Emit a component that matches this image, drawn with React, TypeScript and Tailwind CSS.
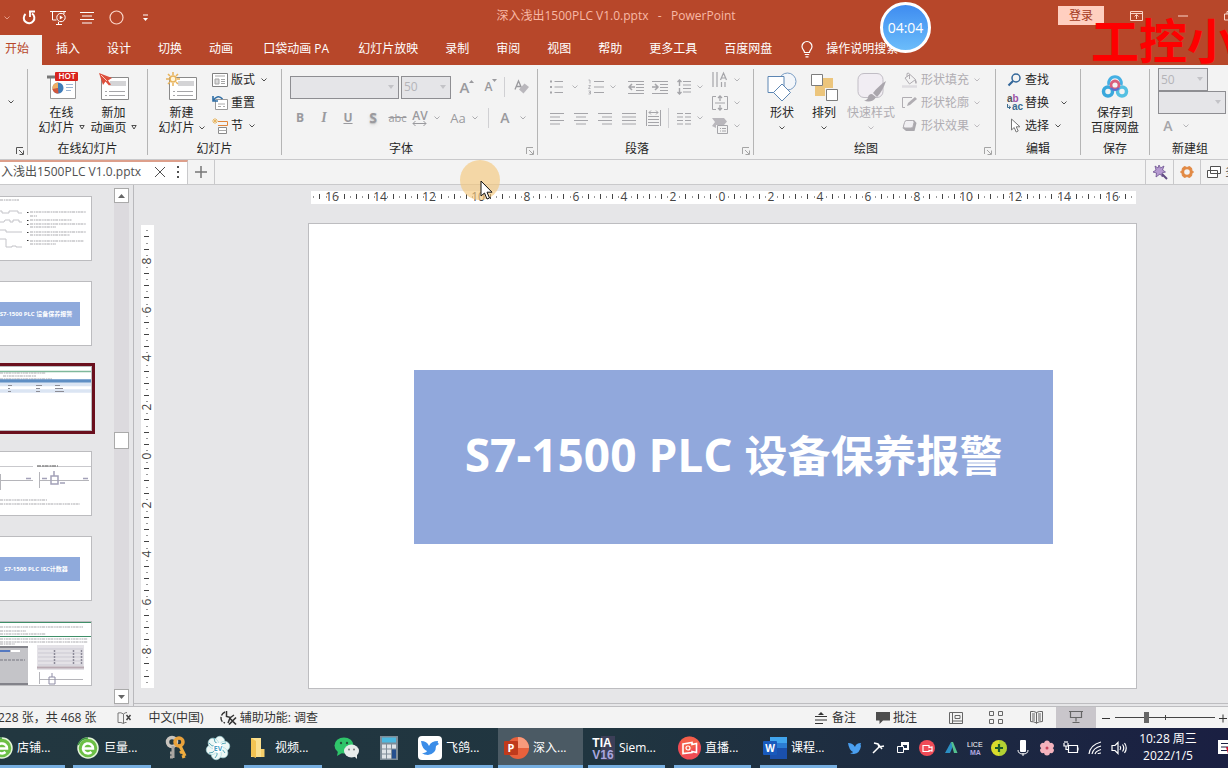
import React from 'react'

type SvgProps = {
  w: number
  h: number
  className?: string
  children: React.ReactNode
}

function Svg({ w, h, className = '', children }: SvgProps) {
  return (
    <svg
      width={w}
      height={h}
      viewBox={`0 0 ${w} ${h}`}
      fill="none"
      stroke="currentColor"
      aria-hidden="true"
      className={`shrink-0 overflow-visible ${className}`}
    >
      {children}
    </svg>
  )
}

function Chevron({ className = '' }: { className?: string }) {
  return (
    <Svg w={6} h={4} className={`opacity-80 ${className}`}>
      <path d="M.5 .5 3 3 5.5 .5" />
    </Svg>
  )
}

function Triangle() {
  return (
    <Svg w={6} h={5}>
      <path d="M.8 .5h4.400L3 4z" strokeWidth=".8" />
    </Svg>
  )
}

const tabs = [
  '插入', '设计', '切换', '动画', '\u00a0口袋动画 PA\u2009', '幻灯片放映', '录制',
  '审阅', '视图', '帮助', '更多工具', '百度网盘',
]

function TitleBar() {
  return (
    <div className="flex h-[35px] items-center text-[#fbd5c8]">
      <div className="flex flex-1 items-center pl-1">
        <button aria-label="更多撤消"><Chevron className="text-[#f0b3a2]" /></button>
        <button aria-label="重做" className="ml-3 text-white">
          <Svg w={14} h={15}>
            <path d="M3.500 4A5.300 5.300 0 1 0 10 3.500" strokeWidth="2" />
            <path d="M7 1.500h6M8 1.500v5.500" strokeWidth="1.800" />
          </Svg>
        </button>
        <button aria-label="从头开始" className="ml-3.5 text-white">
          <Svg w={17} h={16}>
            <path d="M0 1.500h16M2.500 2v8h4M6 14.500h6M8.500 12v2M14 2v2" />
            <circle cx="11" cy="7.500" r="4.200" />
            <path d="M9.800 5.500v4l3.200-2z" fill="currentColor" stroke="none" />
          </Svg>
        </button>
        <button aria-label="居中" className="ml-[13px] text-white">
          <Svg w={14} h={13}>
            <path d="M0 1.500h14M2 5h10M0 8.500h14M2 12h10" />
          </Svg>
        </button>
        <button aria-label="椭圆" className="ml-[15px]">
          <Svg w={15} h={15}><circle cx="7.500" cy="7.500" r="6.500" strokeWidth="1.200" /></Svg>
        </button>
        <button aria-label="自定义快速访问工具栏" className="ml-[18px] text-white">
          <Svg w={7} h={8}>
            <path d="M1 1h5" />
            <path d="M1 4h5L3.500 7z" fill="currentColor" stroke="none" />
          </Svg>
        </button>
      </div>
      <div className="whitespace-pre pb-1 text-[#f7b9a6]">深入浅出1500PLC V1.0.pptx   -   PowerPoint</div>
      <div className="flex flex-1 items-center justify-end self-start pt-[6px]">
        <button className="h-[19px] w-[46px] bg-[#ffcfc0] text-[#a43a20]">登录</button>
        <button aria-label="功能区显示选项" className="ml-[26px]">
          <Svg w={13} h={10}>
            <path d="M.5.5h12v9H.5zM.5 2.500h12M6.500 8V4M4.500 5.500l2-2 2 2" />
          </Svg>
        </button>
        <button aria-label="最小化" className="ml-[35px]">
          <Svg w={10} h={2}><path d="M0 1h10" /></Svg>
        </button>
        <button aria-label="还原" className="ml-9 w-1 overflow-hidden">
          <Svg w={10} h={10}><path d="M.5 3h6v6h-6zM3 3V.5h6.500v6H7" /></Svg>
        </button>
      </div>
    </div>
  )
}

function TabStrip() {
  return (
    <nav className="flex h-[30px] items-stretch text-white">
      <button className="bg-[#f3f3f3] pr-[13px] pb-0.5 pl-[5px] text-[#b7472a]">开始</button>
      {tabs.map((tab) => (
        <button key={tab} className="pr-[13px] pb-0.5 pl-[14px] whitespace-nowrap">{tab}</button>
      ))}
      <label className="ml-4 flex items-center gap-[13px] pb-0.5">
        <Svg w={12} h={17}>
          <path d="M3.500 11.500C3.500 9 1 8.500 1 5.500a5 5 0 0 1 10 0c0 3-2.500 3.500-2.500 6zM3.800 13.500h4.400M4.500 15.800h3" strokeWidth="1.200" />
        </Svg>
        <input
          aria-label="操作说明搜索"
          placeholder="操作说明搜索"
          className="w-24 bg-transparent placeholder:text-white placeholder:opacity-100 focus:outline-none"
        />
      </label>
    </nav>
  )
}

type GroupProps = {
  label: string
  launcher?: boolean
  className?: string
  children: React.ReactNode
}

function Group({ label, launcher, className = '', children }: GroupProps) {
  return (
    <section className={`flex shrink-0 flex-col ${className}`}>
      <div className="flex flex-1">{children}</div>
      <div className="flex h-[19px] items-center pb-0.5">
        <span className="flex-1 text-center">{label}</span>
        {launcher && (
          <button aria-label={`${label}设置`} className="mr-[3px] flex w-[14px] justify-end pt-1 text-[#a5a5a5]">
            <Svg w={8} h={8}>
              <path d="M.5 7V.5H7M3 3l4 4M7.500 3.500v4h-4" />
            </Svg>
          </button>
        )}
      </div>
    </section>
  )
}

function Divider() {
  return <div className="my-1 w-px shrink-0 bg-[#b5b5b5]" />
}

function BigButton({ icon, lines, mark, muted, className = '' }: {
  icon: React.ReactNode
  lines: string[]
  mark?: React.ReactNode
  muted?: boolean
  className?: string
}) {
  return (
    <button disabled={muted} className={`flex shrink-0 flex-col items-center pt-1 leading-[15px] whitespace-nowrap ${muted ? 'text-[#b0adb2]' : 'text-[#262626]'} ${className}`}>
      <span className="flex h-9 items-center justify-center">{icon}</span>
      <span>{lines[0]}</span>
      <span className="flex h-[15px] items-center gap-1">
        {lines[1]}
        {mark}
      </span>
    </button>
  )
}

function SmallButton({ icon, label, chevron, muted, chevronGap = 'ml-1.5' }: {
  icon: React.ReactNode
  label: string
  chevron?: boolean
  muted?: boolean
  chevronGap?: string
}) {
  return (
    <button disabled={muted} className={`flex h-[23px] items-center whitespace-nowrap ${muted ? 'text-[#b0adb2]' : 'text-[#262626]'}`}>
      <span className="flex w-[19px]">{icon}</span>
      {label}
      {chevron && <Chevron className={chevronGap} />}
    </button>
  )
}

function Combo({ label, value, className }: { label: string; value: string; className: string }) {
  return (
    <div className={`relative h-[23px] border border-[#8e8e92] bg-[#e5e5e8] ${className}`}>
      <select disabled aria-label={label} className="h-full w-full appearance-none pl-0.5 text-[#b4b4b8]">
        <option>{value}</option>
      </select>
      <Svg w={6} h={4} className="absolute top-2 right-1 text-[#c3c3c7]">
        <path d="M0 0h6L3 4z" fill="currentColor" stroke="none" />
      </Svg>
    </div>
  )
}

function IconButton({ label, className = 'w-6', children }: { label: string; className?: string; children: React.ReactNode }) {
  return (
    <button aria-label={label} disabled className={`flex h-6 shrink-0 items-center justify-center ${className}`}>
      {children}
    </button>
  )
}

const slideCard = (
  <>
    <path d="M3.500 5.500h27v22h-27z" fill="#fff" stroke="#8a8a8a" />
    <path d="M12 9h16v5H12z" fill="#d4d4d6" stroke="none" />
    <path d="M7 19.500h2M11 19.500h16M7 23.500h2M11 23.500h16" stroke="#a5a5a8" />
  </>
)

function alignPath(kind: string) {
  if (kind === '左对齐') return 'M0 1.500h14M0 5h10M0 8.500h14M0 12h10'
  if (kind === '居中') return 'M0 1.500h14M2 5h10M0 8.500h14M2 12h10'
  if (kind === '右对齐') return 'M0 1.500h14M4 5h10M0 8.500h14M4 12h10'
  return 'M0 1.500h14M0 5h14M0 8.500h14M0 12h14'
}

function Ribbon() {
  return (
    <div className="flex h-[95px] overflow-hidden border-b border-[#c9c9cb] bg-[#f3f3f3] text-[#262626]">
      <section className="flex w-[27px] shrink-0 flex-col justify-between pt-[35px] pl-2">
        <button aria-label="更多"><Chevron /></button>
        <button aria-label="剪贴板设置" className="pb-1 pl-2 text-[#555]">
          <Svg w={8} h={8}><path d="M.5 7V.5H7M3 3l4 4M7.500 3.500v4h-4" /></Svg>
        </button>
      </section>
      <Divider />

      <Group label="在线幻灯片" className="w-[119px]">
        <BigButton
          className="ml-2.5 w-[47px]"
          lines={['在线', '幻灯片']}
          mark={<Triangle />}
          icon={
            <Svg w={32} h={32}>
              <path d="M4.500 5.500h25v22h-25z" fill="#fff" stroke="#999" />
              <path d="M1 6h8" strokeWidth="3" stroke="#777" />
              <circle cx="12" cy="17" r="5.500" fill="#3f7cb8" stroke="none" />
              <path d="M12 17v-5.500a5.500 5.500 0 0 0-5 8z" fill="#f0ad63" stroke="none" />
              <path d="M12 17l-5.500 1a5.500 5.500 0 0 0 6 4.500z" fill="#d2573c" stroke="none" />
              <path d="M20 13.500h7M20 16.500h7M20 19.500h5" stroke="#9ab5d4" />
              <rect x="9" y="1" width="23" height="9" rx="1" fill="#d9231c" stroke="none" />
              <text x="21" y="8" textAnchor="middle" fontSize="8" fontWeight="600" fill="#fff" stroke="none">HOT</text>
            </Svg>
          }
        />
        <BigButton
          className="ml-[5px] w-[47px]"
          lines={['新加', '动画页']}
          mark={<Triangle />}
          icon={
            <Svg w={32} h={30}>
              {slideCard}
              <path d="M1 1l13 5-4 2.500 3 4-2 1-3.500-4L5 13z" fill="#dd4f3c" stroke="none" />
              <path d="M3 3l6 6" stroke="#f8c8bd" />
            </Svg>
          }
        />
      </Group>
      <Divider />

      <Group label="幻灯片" className="w-[133px]">
        <BigButton
          className="ml-2.5 w-[47px]"
          lines={['新建', '幻灯片']}
          mark={<Chevron />}
          icon={
            <Svg w={32} h={30}>
              {slideCard}
              <circle cx="7" cy="7" r="3" fill="#fff4d8" stroke="#e8b35a" strokeWidth="1.500" />
              <path d="M7 0v3M7 11v3M0 7h3M11 7h3M2 2l2 2M10 10l2 2M12 2l-2 2M2 12l2-2" stroke="#e8b35a" strokeWidth="1.500" />
            </Svg>
          }
        />
        <div className="ml-[7px] flex flex-col pt-[3px]">
          <SmallButton
            label="版式"
            chevron
            icon={
              <Svg w={16} h={14}>
                <path d="M.5.5h15v13H.5z" fill="#fff" stroke="#808080" />
                <path d="M3 3h10M3 6h4v5H3z" fill="#d9d9d9" stroke="#a5a5a5" />
                <path d="M9 6.500h4M9 8.500h4M9 10.500h4" stroke="#a5a5a5" />
              </Svg>
            }
          />
          <SmallButton
            label="重置"
            icon={
              <Svg w={16} h={14}>
                <path d="M3.500 3.500h12v10h-12z" fill="#fff" stroke="#999" />
                <path d="M6 8h7M6 10.500h3M11 10.500h2" stroke="#aaa" />
                <path d="M1 0v5h5M1.500 4.500C3 1 7-1 10.500 3" stroke="#2f6ea5" strokeWidth="1.600" />
              </Svg>
            }
          />
          <SmallButton
            label="节"
            chevron
            icon={
              <Svg w={16} h={16}>
                <path d="M6.500 9.500v6h8v-6z" stroke="#8a8a8a" fill="#fff" />
                <path d="M6.500 12.500h8" stroke="#aaa" />
                <path d="M6 3.500h9.500v4H6" stroke="#e0863c" />
                <path d="M3 0v6M0 3h6M1 1l4 4M5 1L1 5" stroke="#e8b35a" strokeWidth=".9" />
              </Svg>
            }
          />
        </div>
      </Group>
      <Divider />

      <Group label="字体" launcher className="w-[255px]">
        <div className="flex flex-1 flex-col pt-2.5 pl-1.5 text-[#9a9a9e]">
          <div className="flex h-6 items-center gap-0.5 pl-0.5">
            <Combo label="字体" value="" className="w-[109px]" />
            <Combo label="字号" value="50" className="w-[50px]" />
            <IconButton label="增大字号" className="ml-[3px] w-[22px]">
              <span className="text-[15px] font-semibold">A</span>
              <Svg w={5} h={4} className="mb-3"><path d="M0 4h5L2.500 1z" fill="currentColor" stroke="none" /></Svg>
            </IconButton>
            <IconButton label="减小字号" className="w-[22px]">
              <span className="text-xs font-semibold">A</span>
              <Svg w={5} h={4} className="mb-3"><path d="M0 0h5L2.500 3z" fill="currentColor" stroke="none" /></Svg>
            </IconButton>
            <div className="h-5 w-px bg-[#d0d0d3]" />
            <IconButton label="清除格式" className="w-7">
              <Svg w={15} h={15}>
                <path d="M1 9.500L4.500 1 8 9M2.500 6.500h4" strokeWidth="1.300" />
                <path d="M5 9.500l5.500-6L15 7l-5.500 6.500z" fill="#b9b7bc" stroke="none" />
              </Svg>
            </IconButton>
          </div>
          <div className="mt-[7px] flex h-6 items-center">
            <IconButton label="加粗"><b>B</b></IconButton>
            <IconButton label="倾斜"><i className="font-['Liberation_Serif',serif] text-sm font-bold">I</i></IconButton>
            <IconButton label="下划线"><u className="font-bold">U</u></IconButton>
            <IconButton label="文字阴影" className="w-[26px]"><b className="text-sm text-shadow-md">S</b></IconButton>
            <IconButton label="删除线" className="w-[23px]"><s className="text-[11px]">abc</s></IconButton>
            <IconButton label="字符间距" className="w-[34px] gap-1.5">
              <span className="flex flex-col items-center text-xs leading-[11px] font-semibold">
                AV
                <Svg w={15} h={5}><path d="M1 2.500h13M3.500 0L1 2.500 3.500 5M11.500 0L14 2.500 11.500 5" /></Svg>
              </span>
              <Chevron />
            </IconButton>
            <IconButton label="更改大小写" className="w-[38px] gap-1.5 pl-1"><span className="text-[13px]">Aa</span><Chevron /></IconButton>
            <div className="ml-[7px] h-5 w-px bg-[#d0d0d3]" />
            <IconButton label="字体颜色" className="ml-1.5 w-9 gap-2.5"><span className="text-sm font-semibold">A</span><Chevron /></IconButton>
          </div>
        </div>
      </Group>
      <Divider />

      <Group label="段落" launcher className="w-[215px]">
        <div className="flex pl-3 text-[#a5a5a9]">
          <div className="flex w-[158px] flex-col pt-2.5">
            <div className="flex h-6 items-center">
              <IconButton label="项目符号" className="w-[38px] justify-start gap-2">
                <Svg w={14} h={16}>
                  <path d="M4.500 2.500H13M4.500 8H13M4.500 13.500H13" />
                  <path d="M0 1.500h2v2H0zM0 7h2v2H0zM0 12.500h2v2H0z" fill="currentColor" stroke="none" />
                </Svg>
                <Chevron />
              </IconButton>
              <IconButton label="编号" className="w-9 justify-start gap-1.5">
                <Svg w={16} h={16}>
                  <path d="M6 2.500h10M6 8h10M6 13.500h10" />
                  <path d="M.5 1H2v3.500M.5 6.500h2L.5 9.500h2M.5 12h2v1.500H1M2.500 13.500V15H.5" strokeWidth=".8" />
                </Svg>
                <Chevron />
              </IconButton>
              <IconButton label="降低列表级别">
                <Svg w={16} h={14}>
                  <path d="M0 1.500h16M8 4.500h8M8 7.500h8M8 10.500h8M0 13.500h16" />
                  <path d="M1 7h6M4 4L1 7l3 3" strokeWidth="1.500" />
                </Svg>
              </IconButton>
              <IconButton label="提高列表级别">
                <Svg w={16} h={14}>
                  <path d="M0 1.500h16M8 4.500h8M8 7.500h8M8 10.500h8M0 13.500h16" />
                  <path d="M0 7h6M3 4l3 3-3 3" strokeWidth="1.500" />
                </Svg>
              </IconButton>
              <IconButton label="行距" className="w-8 gap-1.5 pl-1">
                <Svg w={14} h={16}>
                  <path d="M6 2.500h8M6 6h8M6 9.500h8M6 13h8" />
                  <path d="M2.500 1v6M.5 3l2-2 2 2M2.500 9v6M.5 13l2 2 2-2" strokeWidth="1.400" />
                </Svg>
                <Chevron />
              </IconButton>
            </div>
            <div className="mt-[7px] flex h-6 items-center">
              {['左对齐', '居中', '右对齐', '两端对齐'].map((kind) => (
                <IconButton key={kind} label={kind} className="w-6 justify-start">
                  <Svg w={14} h={13}><path d={alignPath(kind)} /></Svg>
                </IconButton>
              ))}
              <IconButton label="分散对齐" className="w-[18px] justify-start">
                <Svg w={15} h={16}>
                  <path d="M.5 0v16M14.500 0v16M2 6.500h11M2 9.500h11M2 12.500h11M2 15.500h11" />
                  <path d="M3 2.500h9M5 .5l-2 2 2 2M10 .5l2 2-2 2" />
                </Svg>
              </IconButton>
              <div className="ml-1 h-5 w-px bg-[#d0d0d3]" />
              <IconButton label="分栏" className="ml-2 w-[30px] justify-start gap-1.5">
                <Svg w={14} h={13}><path d="M0 1.500h6M8 1.500h6M0 5h6M8 5h6M0 8.500h6M8 8.500h6M0 12h6M8 12h6" /></Svg>
                <Chevron />
              </IconButton>
            </div>
          </div>
          <div className="flex flex-col pt-[3px] pl-1">
            <button disabled aria-label="文字方向" className="flex h-[23px] items-center gap-1.5">
              <Svg w={16} h={16}>
                <path d="M1 0v15M5 0v15M9.500 10v5M13 10v5M8.500 8L11.500 1l3 7M9.500 6h4" strokeWidth="1.200" />
              </Svg>
              <Chevron />
            </button>
            <button disabled aria-label="对齐文本" className="flex h-[23px] items-center gap-1.5">
              <Svg w={16} h={16}>
                <path d="M4 1.500H.5v13H4M12 1.500h3.500v13H12M3 8h10" />
                <path d="M8 1v5M6 3l2-2 2 2M8 10v5M6 13l2 2 2-2" strokeWidth="1.300" />
              </Svg>
              <Chevron />
            </button>
            <button disabled aria-label="转换为 SmartArt" className="flex h-[23px] items-center gap-1.5">
              <Svg w={16} h={16}>
                <path d="M0 0h12l3 3.500L12 7H4v3L0 8l3-4z" fill="#b9b7bc" stroke="none" />
                <path d="M5.500 7.500h10v8h-10z" fill="#f3f3f3" />
                <path d="M8 10.500h1M10 10.500h4M8 13h1M10 13h4" />
              </Svg>
              <Chevron />
            </button>
          </div>
        </div>
      </Group>
      <Divider />

      <Group label="绘图" launcher className="w-[241px]">
        <BigButton
          className="ml-2 w-10"
          lines={['形状', '']}
          mark={<Chevron />}
          icon={
            <Svg w={30} h={30}>
              <circle cx="20.500" cy="9.500" r="8.500" stroke="#7a9dc4" fill="#f3f6fa" />
              <path d="M1 4.500h16v16H1z" fill="#fff" stroke="#5d86b3" />
              <path d="M15 12l8.500 8.500L15 29l-8.500-8.500z" fill="#fff" stroke="#5d86b3" />
            </Svg>
          }
        />
        <BigButton
          className="ml-0.5 w-10"
          lines={['排列', '']}
          mark={<Chevron />}
          icon={
            <Svg w={28} h={28}>
              <path d="M13 5h10v10H13zM5 13h10v10H5z" fill="#ecc57c" stroke="none" />
              <path d="M1.500 1.500h11v11h-11zM16.500 16.500h11v11h-11z" fill="#fff" stroke="#7d7d7d" />
            </Svg>
          }
        />
        <BigButton
          className="ml-0.5 w-[50px]"
          muted
          lines={['快速样式', '']}
          mark={<Chevron />}
          icon={
            <Svg w={30} h={30}>
              <rect x="2" y="1.500" width="25" height="24" rx="6" fill="#f1edf3" stroke="#c1bdc5" />
              <path d="M30 9c-5 3-10 8-13 12l4 4c4-4 7-10 9-16z" fill="#aaa6ad" stroke="none" />
              <path d="M16 22c-3 0-4 2-4 3.500s-2 3-4 3c4 2 10 1 12-3.500z" fill="#aaa6ad" stroke="none" />
            </Svg>
          }
        />
        <div className="ml-1.5 flex flex-col pt-[3px]">
          <SmallButton
            muted
            chevron
            chevronGap="ml-[5px]"
            label="形状填充"
            icon={
              <Svg w={16} h={16}>
                <path d="M3 6l5-3.500 5.500 5L7.500 12zM5 5V1.500q2-1.500 2.500 1V7" />
                <path d="M13 7q3 3 1 5-1.500-1-1-5z" fill="currentColor" stroke="none" />
                <path d="M0 14.500h15" strokeWidth="2.500" stroke="#dedce0" />
              </Svg>
            }
          />
          <SmallButton
            muted
            chevron
            chevronGap="ml-[5px]"
            label="形状轮廓"
            icon={
              <Svg w={16} h={16}>
                <path d="M10 2.500H.5v10H3" />
                <path d="M5 11l1-3 7-6 2 2-7 6z" fill="currentColor" stroke="none" />
              </Svg>
            }
          />
          <SmallButton
            muted
            chevron
            chevronGap="ml-[5px]"
            label="形状效果"
            icon={
              <Svg w={16} h={14}>
                <path d="M4 1h8l2.500 3-2 8H4L.5 9z" fill="#aaa8ad" stroke="none" />
                <path d="M4.500 1.500h6q2 0 1.500 2l-1 4Q10.500 9 9 9H3Q1 9 1.500 7l1-3.500q.5-2 2-2z" fill="#f0eff2" />
              </Svg>
            }
          />
        </div>
      </Group>
      <Divider />

      <Group label="编辑" className="w-[84px]">
        <div className="ml-2.5 flex flex-col pt-[3px]">
          <SmallButton
            label="查找"
            icon={
              <Svg w={16} h={14}>
                <circle cx="10" cy="5" r="4" stroke="#33679a" strokeWidth="1.500" />
                <path d="M7 8l-4.500 4.500" stroke="#33679a" strokeWidth="2.200" />
              </Svg>
            }
          />
          <SmallButton
            label="替换"
            chevron
            chevronGap="ml-3"
            icon={
              <Svg w={17} h={16} className="font-['Liberation_Sans',sans-serif]">
                <text x="1" y="7" fontSize="10" fontWeight="700" fill="#555" stroke="none">
                  a<tspan fill="#9c4fa5">b</tspan>
                </text>
                <text x="6" y="15" fontSize="10" fontWeight="700" fill="#3c6d91" stroke="none">ac</text>
                <path d="M1.500 9v3.500h3M3 10.500l1.500 2L3 14" stroke="#3c6d91" />
              </Svg>
            }
          />
          <SmallButton
            label="选择"
            chevron
            icon={
              <Svg w={14} h={16} className="ml-1">
                <path d="M1.500 1v11l2.700-2.500 2 4.500 2-1-2-4.200H10z" fill="#fff" stroke="#777" />
              </Svg>
            }
          />
        </div>
      </Group>
      <Divider />

      <Group label="保存" className="w-[68px]">
        <BigButton
          className="flex-1"
          lines={['保存到', '百度网盘']}
          icon={
            <Svg w={28} h={22}>
              <circle cx="7" cy="15.500" r="4.500" stroke="#3aa8dc" strokeWidth="3.500" />
              <circle cx="21" cy="15.500" r="4.500" stroke="#55c0e2" strokeWidth="3.500" />
              <path d="M8 9a6.300 6.300 0 1 1 12 0" stroke="#45b0e4" strokeWidth="3" />
              <circle cx="14" cy="9" r="4" stroke="#d9607c" strokeWidth="2.800" />
              <path d="M10 12q4 4 8 0" stroke="#5b6fd0" strokeWidth="2" />
            </Svg>
          }
        />
      </Group>
      <Divider />

      <Group label="新建组" className="w-20">
        <div className="flex flex-col pt-[3px] pl-2">
          <Combo label="字号" value="50" className="w-[50px]" />
          <Combo label="字体" value="" className="w-[68px]" />
          <div className="flex h-6 text-[#a5a5a9]">
            <IconButton label="字体颜色" className="w-9 gap-2.5"><span className="text-sm font-semibold">A</span><Chevron /></IconButton>
          </div>
        </div>
      </Group>
    </div>
  )
}

function DocumentTabs() {
  return (
    <div className="flex h-[25px] shrink-0 border-b border-[#c9c9cb] bg-[#f3f3f3] text-[#505050]">
      <div className="flex w-[188px] items-center border-t-2 border-r border-t-[#dd9f8b] border-r-[#c9c9cb] bg-white pb-0.5 pl-px">
        <span className="flex-1 whitespace-nowrap">入浅出1500PLC V1.0.pptx</span>
        <button aria-label="关闭">
          <Svg w={10} h={10}><path d="M0 0l10 10M10 0L0 10" /></Svg>
        </button>
        <button aria-label="选项" className="mr-2 ml-3">
          <Svg w={2} h={12}><path d="M1 0v2M1 5v2M1 10v2" strokeWidth="2" /></Svg>
        </button>
      </div>
      <button aria-label="新建标签" className="flex w-[27px] items-center justify-center border-r border-[#c9c9cb] text-[#777]">
        <Svg w={12} h={12}><path d="M6 0v12M0 6h12" strokeWidth="1.500" /></Svg>
      </button>
      <div className="flex-1" />
      <button aria-label="魔棒" className="flex w-7 items-center justify-center border-l border-[#c9c9cb]">
        <Svg w={16} h={16}>
          <path d="M7 1l1.500 3L12 2l-1.500 4 3 2-3.500 1 .5 4L8 10l-4 3 .5-4L1 8l3-2-1-4 3 2z" fill="#b59ad0" stroke="#6d5391" strokeWidth=".8" />
          <path d="M10 10l5 5" stroke="#5f4a80" strokeWidth="2" />
        </Svg>
      </button>
      <button aria-label="设置" className="flex w-[27px] items-center justify-center border-l border-[#c9c9cb]">
        <Svg w={14} h={14}>
          <path d="M4.500 1.500l2.500 1 2.500-1 2 1.500.5 2.500L13.500 7 12 8.500l-.5 2.500-2 1.500-2.500-1-2.500 1-2-1.500L2 8.500.5 7 2 5.500 2.500 3z" fill="#e28a45" stroke="#e28a45" />
          <circle cx="7" cy="7" r="2.800" fill="#f3f3f3" stroke="none" />
        </Svg>
      </button>
      <button className="flex w-7 items-center gap-1 overflow-hidden border-l border-[#c9c9cb] pl-1.5 whitespace-nowrap">
        <Svg w={14} h={12}><path d="M3.500 .5h10v7h-10zM.5 4.500h10v7H.5z" fill="#fff" /></Svg>
        多窗口
      </button>
    </div>
  )
}

function Banner({ text }: { text: string }) {
  return (
    <div className="mt-5 mr-[11px] flex h-6 items-center justify-center bg-[#8faadc] pr-2 text-[6px] font-bold whitespace-nowrap text-white">
      {text}
    </div>
  )
}

function TinyLines({ rows }: { rows: number[][] }) {
  return (
    <>
      {rows.map(([x1, x2, y]) => (
        <path key={`${x1}-${y}`} d={`M${x1} ${y}H${x2}`} stroke="#a9a9ae" strokeWidth="1.200" strokeDasharray="3 .8 1.500 .6 2 .5" />
      ))}
    </>
  )
}

const thumbs = [
  {
    name: '幻灯片 226',
    body: (
      <Svg w={91} h={63}>
        <TinyLines rows={[[0, 19, 3], [30, 86, 15], [30, 37, 19], [30, 72, 23], [30, 86, 27], [30, 56, 30], [30, 86, 35], [30, 70, 38], [30, 84, 44], [30, 56, 47]]} />
        <path d="M27 15.500h1.500M27 23.500h1.500M27 27.500h1.500M27 35.500h1.500M27 43.500h1.500" stroke="#333" />
        <path d="M0 14h2v2h7v-2h9v2h4M0 25h4l1-2h5v2h3v-2h6v2h3M0 33h6v2h16M0 42h6v8h6v-1h4v1h6" stroke="#c4c4c9" />
      </Svg>
    ),
  },
  { name: '幻灯片 227', body: <Banner text="S7-1500 PLC 设备保养报警" /> },
  {
    name: '幻灯片 228',
    selected: true,
    body: (
      <Svg w={91} h={63}>
        <path d="M0 4.500h91" stroke="#7fb89b" strokeWidth="1.500" />
        <TinyLines rows={[[0, 46, 6], [3, 36, 9], [0, 52, 12]]} />
        <path d="M0 14h91" stroke="#5f8fc4" strokeWidth="3.500" />
        <path d="M0 17.500h91M0 24h91" stroke="#dbe5f3" strokeWidth="3.500" />
        <path d="M8 18.500h4M8 21.500h2M8 24.500h3M36 18.500h6M36 21.500h4M36 24.500h4M55 18.500h5M55 21.500h8M55 24.500h9" stroke="#8c8c94" strokeWidth="1.200" />
      </Svg>
    ),
  },
  {
    name: '幻灯片 229',
    body: (
      <Svg w={91} h={63}>
        <path d="M0 14.500h33M37 14.500h54" stroke="#c9c9cd" />
        <path d="M37 14h21" stroke="#888" strokeWidth="1.500" strokeDasharray="4 1 2 .5" />
        <path d="M0 28.500h33M39 28.500h50M.5 22v16M39.500 20v16" stroke="#b5b5ba" />
        <path d="M51 24h7v8h-7zM54 19v5M26 26.500h5M42 26.500h5M83 26.500h5M60 31h5" stroke="#a3a1b8" strokeWidth="1.500" />
        <TinyLines rows={[[0, 47, 48], [0, 80, 52]]} />
      </Svg>
    ),
  },
  { name: '幻灯片 230', body: <Banner text="S7-1500 PLC IEC计数器" /> },
  {
    name: '幻灯片 231',
    body: (
      <Svg w={91} h={63}>
        <path d="M0 .5h91M0 14.500h91" stroke="#3f8f68" strokeWidth="1.200" />
        <TinyLines rows={[[0, 83, 5], [0, 26, 9], [0, 46, 12], [0, 88, 17], [0, 88, 20], [0, 15, 22]]} />
        <path d="M0 24h28v39H0z" fill="#c4c4c8" stroke="none" />
        <path d="M0 25h28M0 62h28" stroke="#83838a" strokeWidth="2" />
        <path d="M0 29h10" stroke="#5579c0" strokeWidth="2" />
        <path d="M11 29h9" stroke="#fff" strokeWidth="2" />
        <path d="M0 38h25" stroke="#909098" strokeWidth="1.500" strokeDasharray="3 1" />
        <path d="M37 23h47v25H37z" fill="#e4e2e7" stroke="none" />
        <path d="M38 27h45M38 31h45M38 35h45M38 39h45M38 43h45" stroke="#cbc9d2" />
        <path d="M37 45.500h47" stroke="#b8a9b2" strokeWidth="2" />
        <path d="M54.500 28v15M73.500 28v15M81.500 28v15" stroke="#8c8a98" strokeWidth="1.500" strokeDasharray="2 1" />
        <path d="M39.500 50v12M39 57.500h44" stroke="#b5b5ba" />
        <path d="M49 55h6v7h-6zM52 51v4" stroke="#8e8ca5" />
      </Svg>
    ),
  },
]

function SlideList() {
  return (
    <aside className="flex w-[134px] shrink-0 border-r border-[#b9b9bc]">
      <div className="flex w-[114px] flex-col gap-5 overflow-hidden pt-[11px]">
        {thumbs.map((thumb) => (
          <button
            key={thumb.name}
            aria-label={thumb.name}
            className={`block h-[65px] w-[92px] shrink-0 border-y border-r border-[#bcbcbf] bg-white text-left ${thumb.selected ? 'outline-3 outline-[#6a0f1d]' : ''}`}
          >
            <span className="block h-full overflow-hidden">{thumb.body}</span>
          </button>
        ))}
      </div>
      <div className="flex w-[15px] flex-col bg-[#dcdade] pb-0.5 text-[#666]">
        <div className="h-[3px] bg-[#e6e6e8]" />
        <button aria-label="向上滚动" className="flex h-[15px] items-center justify-center border border-[#aaa] bg-white">
          <Svg w={7} h={4}><path d="M0 4h7L3.500 0z" fill="currentColor" stroke="none" /></Svg>
        </button>
        <div className="grow-[229]" />
        <div className="h-[17px] border border-[#aaa] bg-white" />
        <div className="grow-[240]" />
        <button aria-label="向下滚动" className="flex h-[15px] items-center justify-center border border-[#aaa] bg-white">
          <Svg w={7} h={4}><path d="M0 0h7L3.500 4z" fill="currentColor" stroke="none" /></Svg>
        </button>
      </div>
    </aside>
  )
}

const UNIT = 6.1

// Quarter-unit marks on both sides of zero, a number on every second unit
function Ruler({ length, zero, vertical }: { length: number; zero: number; vertical?: boolean }) {
  const reach = Math.floor((length - zero - 2) / UNIT)
  const marks = Array.from({ length: reach * 2 + 1 }, (_, i) => i - reach)
  return (
    <svg
      width={vertical ? 13 : length}
      height={vertical ? length : 13}
      className="shrink-0 overflow-visible bg-white text-[#444]"
      role="img"
      aria-label={vertical ? '垂直标尺' : '水平标尺'}
    >
      {marks.map((k) => {
        const at = Math.round(zero + k * UNIT)
        if (k % 8 === 0) {
          return (
            <text
              key={k}
              x={vertical ? 0 : at}
              y={vertical ? 0 : 10}
              transform={vertical ? `translate(10 ${at}) rotate(-90)` : undefined}
              textAnchor="middle"
              fontSize="12"
              fill="currentColor"
            >
              {Math.abs(k / 4)}
            </text>
          )
        }
        const major = k % 2 === 0
        const size = major ? 5 : 1
        const start = major ? 3 : 5
        const fill = major ? '#444' : '#999'
        return vertical
          ? <rect key={k} x={start} y={at} width={size + (major ? 0 : 1)} height={1} fill={fill} />
          : <rect key={k} x={at} y={start} width={1} height={size + (major ? 0 : 1)} fill={fill} />
      })}
    </svg>
  )
}

function Editor() {
  return (
    <main className="flex min-w-0 flex-1 flex-col pt-[6px]">
      <div className="flex justify-center overflow-hidden pr-[92px] pl-[177px]">
        <Ruler length={825} zero={411} />
      </div>
      <div className="flex min-h-0 flex-1 pt-[19px] pr-[91px] pb-3.5">
        <div className="ml-[7px] pt-0.5"><Ruler length={463} zero={231} vertical /></div>
        <div className="ml-[154px] flex aspect-video flex-1 flex-col justify-center self-start border border-[#bdbdc0] bg-white">
          <div className="mt-0.5 ml-[12.700%] flex h-[37.500%] w-[77.300%] items-center justify-center bg-[#91a8dc]">
            <h1 className="pb-1 text-[43px] leading-[60px] font-bold whitespace-nowrap text-white">
              <span className="text-[46px]">S7-1500 PLC </span>
              设备保养报警
            </h1>
          </div>
        </div>
      </div>
      <div className="mb-0.5 h-px bg-[#bdbdc0]" />
    </main>
  )
}

function StatusBar() {
  return (
    <footer className="flex h-[22px] shrink-0 items-center border-t border-[#bdbdc0] bg-[#f3f3f3] whitespace-nowrap text-[#333]">
      <span className="-ml-0.5">228 张，共 468 张</span>
      <button aria-label="拼写检查" className="ml-5 text-[#777]">
        <Svg w={16} h={12}>
          <path d="M6.500 2v9.500M6.500 2Q4 0 1 1v9.500q3-.5 5.500 1 1.500-1.500 3-1M6.500 2Q8 .5 10 .5" />
          <path d="M9.500 3l4 5M13.500 3l-4 5" strokeWidth="1.500" stroke="#444" />
        </Svg>
      </button>
      <button className="ml-4">中文(中国)</button>
      <button className="ml-4 flex items-center gap-[3px]">
        <Svg w={17} h={14}>
          <path d="M5 1Q1 3 1 7t4 5" strokeWidth="1.400" strokeDasharray="5 1.500" />
          <path d="M6.500 0v5.500l4 1L14 4M10 7l-2 5" strokeWidth="1.500" />
          <path d="M9.500 7l6.500 6.500M16 6.500l-7 7" strokeWidth="1.700" />
        </Svg>
        辅助功能: 调查
      </button>
      <div className="flex-1" />
      <button className="flex items-center gap-[5px]">
        <Svg w={12} h={12}>
          <path d="M0 4.500h12M0 8h12M0 11.500h8" />
          <path d="M3 3h6L6 0z" fill="currentColor" stroke="none" />
        </Svg>
        备注
      </button>
      <button className="ml-5 flex items-center gap-[3px]">
        <Svg w={14} h={12}><path d="M0 0h14v8.500H7L3.500 12V8.500H0z" fill="#4d4d4d" stroke="none" /></Svg>
        批注
      </button>
      <div className="ml-[19px] flex h-full text-[#666]">
        <button aria-label="普通视图" className="flex w-10 items-center justify-center">
          <Svg w={14} h={12}><path d="M.5.5h13v11H.5zM3.500.5v11M6 3.500h5v3H6zM3.500 9h10" /></Svg>
        </button>
        <button aria-label="幻灯片浏览" className="flex w-10 items-center justify-center">
          <Svg w={14} h={13}><path d="M.5.5h4v4h-4zM9.500.5h4v4h-4zM.5 8.500h4v4h-4zM9.500 8.500h4v4h-4z" /></Svg>
        </button>
        <button aria-label="阅读视图" className="flex w-10 items-center justify-center">
          <Svg w={13} h={13}><path d="M6.500 1.500v11M6.500 1.500Q4 0 .5.500v10q3.500 0 6 1.500 2.500-1.500 6-1.500V.5q-3.500-.5-6 1M2 3h3M2 5h3M2 7h3M2 9h3M8 3h3M8 5h3M8 7h3M8 9h3" /></Svg>
        </button>
        <button aria-label="幻灯片放映" className="flex w-10 items-center justify-center bg-[#c9c6cb]">
          <Svg w={14} h={13}><path d="M0 .5h14M1.500.5v6h11v-6M7 6.500v4M3.500 11.500h7" strokeWidth="1.200" /></Svg>
        </button>
      </div>
      <div className="ml-1.5 flex items-center text-[#333]">
        <button aria-label="缩小"><Svg w={8} h={8}><path d="M0 4.500h8" /></Svg></button>
        <input
          type="range"
          aria-label="缩放"
          defaultValue={31}
          className="ml-[5px] h-3 w-[100px] appearance-none bg-[linear-gradient(#444,#444),linear-gradient(#444,#444)] bg-[length:100%_1px,1px_5px] bg-center bg-no-repeat [&::-webkit-slider-thumb]:h-[11px] [&::-webkit-slider-thumb]:w-[5px] [&::-webkit-slider-thumb]:appearance-none [&::-webkit-slider-thumb]:bg-[#666]"
        />
        <button aria-label="放大" className="ml-1"><Svg w={9} h={8}><path d="M0 4.500h8M4 .5v8" /></Svg></button>
      </div>
    </footer>
  )
}

function BrowserIcon() {
  return (
    <Svg w={22} h={22}>
      <circle cx="11" cy="11" r="10" fill="#6cbf45" stroke="#e4f5da" strokeWidth="1.500" />
      <path d="M6 11.500h10A5 5 0 1 0 14.500 15" stroke="#fff" strokeWidth="2.500" />
      <path d="M1 8Q4 1 11 1" stroke="#3d9440" strokeWidth="1.500" />
    </Svg>
  )
}

function TaskButton({ label, icon, active, className }: {
  label: string
  icon: React.ReactNode
  active?: boolean
  className: string
}) {
  return (
    <button className={`flex h-full shrink-0 items-center border-b-3 border-[#76aee0] pt-0.5 whitespace-nowrap ${active ? 'bg-[#4b5a64]' : ''} ${className}`}>
      {icon}
      {label}
    </button>
  )
}

function Taskbar() {
  return (
    <div className="flex h-10 shrink-0 items-center overflow-hidden bg-linear-to-r from-[#223740] via-[#203540] to-[#1a1f42] text-white">
      <TaskButton className="w-[65px] gap-1" label="店铺..." icon={<span className="flex w-[13px] justify-end overflow-hidden"><BrowserIcon /></span>} />
      <TaskButton className="ml-2 w-[78px] gap-[5px] pl-1" label="巨量..." icon={<BrowserIcon />} />
      <button aria-label="密钥" className="ml-3.5">
        <Svg w={23} h={24}>
          <circle cx="7" cy="6" r="4.500" stroke="#c9c4be" strokeWidth="3.500" />
          <path d="M8 10v12M8 17H5M8 21H5" stroke="#aaa6a2" strokeWidth="3" />
          <circle cx="14" cy="6" r="4" stroke="#e9a13b" strokeWidth="3.500" />
          <path d="M15 10l5 10M18 15l-3 2M20 20l-3 1" stroke="#f0ad3f" strokeWidth="3.200" />
        </Svg>
      </button>
      <button aria-label="EV" className="ml-[18px]">
        <Svg w={24} h={24}>
          <g fill="#eef8f6" stroke="#a7d9dd" strokeWidth=".6">
            {[15, 75, 135, 195, 255, 315].map((a) => (
              <ellipse key={a} cx="12" cy="5.500" rx="5" ry="5.500" transform={`rotate(${a} 12 12)`} />
            ))}
          </g>
          <path d="M8 2q0 5 4 6M20 7q-5 0-6 3M19 17q-2-4-5-4M9 22q3-3 2-6M3 17q5 0 6-3M3 7q3 4 6 3" stroke="#5aa9b8" />
          <circle cx="12" cy="12" r="5" fill="#fff" stroke="none" />
          <text x="12" y="14.500" fontSize="7" fontWeight="700" textAnchor="middle" fill="#4b9fc4" stroke="none">EV</text>
        </Svg>
      </button>
      <TaskButton
        className="ml-3.5 w-[78px] gap-[10px] pl-1.5"
        label="视频..."
        icon={
          <Svg w={15} h={20}>
            <path d="M1 0h10v19H1z" fill="#fbe08f" stroke="none" />
            <path d="M1 0l5 3v17l-5-2z" fill="#f3c452" stroke="none" />
            <path d="M11 11h3.500v8H11z" fill="#f6cf6a" stroke="none" />
          </Svg>
        }
      />
      <button aria-label="微信" className="ml-3">
        <Svg w={26} h={22}>
          <ellipse cx="10" cy="8.500" rx="9.500" ry="8" fill="#2fc56a" stroke="none" />
          <path d="M4 14l-1 5 5-3z" fill="#2fc56a" stroke="none" />
          <ellipse cx="17.500" cy="14" rx="7.500" ry="6.500" fill="#e8eceb" stroke="none" />
          <path d="M20 19l3 3v-5z" fill="#e8eceb" stroke="none" />
          <g fill="#23543b" stroke="none"><circle cx="7" cy="6" r="1.200" /><circle cx="13" cy="6" r="1.200" /></g>
          <g fill="#777" stroke="none"><circle cx="15" cy="12.500" r="1" /><circle cx="20" cy="12.500" r="1" /></g>
        </Svg>
      </button>
      <button aria-label="计算器" className="ml-5">
        <Svg w={18} h={24}>
          <path d="M0 0h18v24H0z" fill="#7f8d98" stroke="none" />
          <path d="M2 1.500h14v5H2z" fill="#4bb8e0" stroke="none" />
          <path d="M2 8.500h4v4H2zM7 8.500h4v4H7zM12 8.500h4v4h-4zM2 13.500h4v4H2zM7 13.500h4v4H7zM2 18.500h4v4H2zM7 18.500h4v4H7z" fill="#dfe4e8" stroke="none" />
          <path d="M12 13.500h4v9h-4z" fill="#254f8e" stroke="none" />
        </Svg>
      </button>
      <TaskButton
        className="ml-[17px] w-[78px] gap-1 pl-[3px]"
        label="飞鸽..."
        icon={
          <Svg w={24} h={24}>
            <rect width="24" height="24" rx="4" fill="#fff" stroke="none" />
            <path d="M3 5q6 0 8 5 2-5 9-5-1 2 1 3l-3 2q0 8-8 9-4 0-6-2 4 0 5-2-5-2-6-10z" fill="#3b8de8" stroke="none" />
          </Svg>
        }
      />
      <TaskButton
        active
        className="ml-[5px] w-[85px] gap-1 pl-1.5"
        label="深入..."
        icon={
          <Svg w={25} h={24}>
            <circle cx="14" cy="12" r="11" fill="#e8613c" stroke="none" />
            <path d="M14 1a11 11 0 0 1 11 11H14z" fill="#f99b7c" stroke="none" />
            <rect y="5" width="14" height="14" rx="1" fill="#bf3a1c" stroke="none" />
            <text x="7" y="16" fontSize="11" fontWeight="700" textAnchor="middle" fill="#fff" stroke="none">P</text>
          </Svg>
        }
      />
      <TaskButton
        className="ml-[5px] w-[77px] gap-1 pl-[3px]"
        label="Siem..."
        icon={
          <Svg w={24} h={24} className="font-['Liberation_Sans',sans-serif]">
            <path d="M10 0h14v24H10z" fill="#3c3f58" stroke="none" />
            <text x="11" y="11" fontSize="12" fontWeight="700" textAnchor="middle" fill="#fff" stroke="none">TIA</text>
            <text x="12" y="23" fontSize="12" fontWeight="700" textAnchor="middle" fill="#a9a6de" stroke="none">V16</text>
          </Svg>
        }
      />
      <TaskButton
        className="ml-[9px] w-[77px] gap-1 pl-1"
        label="直播..."
        icon={
          <Svg w={23} h={24}>
            <circle cx="11.500" cy="12" r="11.500" fill="#f04b54" stroke="none" />
            <path d="M3 4a11.500 11.500 0 0 1 19 4L3 20z" fill="#f7743f" stroke="none" opacity=".5" />
            <path d="M5 8l9-1.500v2l4.500-1v9l-4.500-1v1L5 17.500z" stroke="#fff" strokeWidth="1.600" />
            <circle cx="10" cy="12" r="2" stroke="#fff" strokeWidth="1.200" />
          </Svg>
        }
      />
      <TaskButton
        className="ml-[9px] w-[77px] gap-1 pl-[3px]"
        label="课程..."
        icon={
          <Svg w={24} h={22}>
            <path d="M7 0h17v6H7z" fill="#41a5ee" stroke="none" />
            <path d="M7 6h17v5H7z" fill="#2b7cd3" stroke="none" />
            <path d="M7 11h17v11H7z" fill="#1a50ad" stroke="none" />
            <rect y="4" width="14" height="14" rx="1" fill="#185abd" stroke="none" />
            <text x="7" y="15" fontSize="10" fontWeight="700" textAnchor="middle" fill="#fff" stroke="none">W</text>
          </Svg>
        }
      />
      <div className="flex-1" />
      <Tray />
    </div>
  )
}

const trayIcons = [
  {
    name: '飞鸽',
    icon: <path d="M1 3q5 0 7 4 1-4 6-4-1 2 0 3-1 7-7 8-3 0-4-1 3 0 3-1Q2 10 1 3z" fill="#4a9ff0" stroke="none" />,
  },
  { name: '手势', icon: <path d="M3 3l4 1 4 5M7 4l1 3-6 6M8 7l5-1" strokeWidth="1.500" /> },
  {
    name: '窗口',
    icon: <><path d="M6 2h8v8H6z" fill="#fff" stroke="none" /><path d="M8 5h4v3H8z" fill="#20304a" stroke="none" /><path d="M2.500 6.500h6v6h-6z" fill="#20304a" stroke="#fff" /></>,
  },
  {
    name: '直播',
    icon: <><circle cx="8" cy="8" r="8" fill="#ef4b57" stroke="none" /><path d="M4 5.500h6v2l3-.5v4l-3-.5v1H4z" stroke="#fff" strokeWidth="1.200" /></>,
  },
  {
    name: 'Autodesk',
    icon: <><path d="M2 13L8 2l2 4-3 7z" fill="#2b8fc4" stroke="none" /><path d="M8 2h2l4.500 11H11z" fill="#54c18f" stroke="none" /></>,
  },
  {
    name: '许可证',
    icon: (
      <g className="font-['Liberation_Sans',sans-serif]">
        <text x="0" y="7" fontSize="7" fill="#fff" stroke="none">LICE</text>
        <text x="3" y="15" fontSize="7" fontWeight="700" fill="#b0a8e0" stroke="none">MA</text>
      </g>
    ),
  },
  {
    name: '安全卫士',
    icon: <><circle cx="8" cy="8" r="8" fill="#d9dc2c" stroke="none" /><path d="M8 0a8 8 0 0 1 0 16z" fill="#58b947" stroke="none" opacity=".3" /><path d="M8 4v8M4 8h8" stroke="#1c5b2b" strokeWidth="2.200" /></>,
  },
  {
    name: '麦克风',
    icon: <><rect x="5" y="0" width="6" height="12" rx="1" fill="#fff" stroke="none" /><path d="M3 10q0 4 5 4t5-4M8 13v3" /></>,
  },
  {
    name: '花',
    icon: (
      <>
        {[0, 60, 120, 180, 240, 300].map((a) => (
          <ellipse key={a} cx="8" cy="4" rx="3" ry="3.500" fill="#f4b3bd" stroke="none" transform={`rotate(${a} 8 8)`} />
        ))}
        <circle cx="8" cy="8" r="1.500" fill="#c9455e" stroke="none" />
      </>
    ),
  },
  { name: '电池', icon: <path d="M5.500 5.500h9v7h-9zM15 7.500v3M1 3v3h4V3M2 3V1M4 3V1M3 6v3.500h2.500" strokeWidth="1.200" /> },
  { name: '网络', icon: <path d="M2 14Q3 5 14 2M5 14q1-6 9-8M8 14q1-3 6-4.500M11 14q0-1 3-1" strokeWidth="1.200" /> },
  { name: '音量', icon: <path d="M1 5.500h3l3-3v11l-3-3H1zM9 6q1.500 2 0 4M11.500 4.500q2.500 3.500 0 7M13.500 3q3.500 5 0 10" strokeWidth="1.200" /> },
]

function Tray() {
  return (
    <div className="flex h-full items-center">
      {trayIcons.map((item) => (
        <button key={item.name} aria-label={item.name} className="flex w-6 justify-center">
          <Svg w={16} h={16}>{item.icon}</Svg>
        </button>
      ))}
      <button className="ml-1.5 w-[62px] pb-0.5 text-center leading-[17px]">
        10:28 周三
        <br />
        2022/1/5
      </button>
      <button aria-label="通知" className="ml-[18px] w-[11px] overflow-hidden">
        <Svg w={16} h={18}>
          <path d="M1 1h15v14H1z" fill="#fff" stroke="none" />
          <path d="M4 4.500h10M4 8h10M4 11.500h6" stroke="#1b2144" />
          <path d="M9 8h7v10h-4z" fill="#c8102e" stroke="none" />
        </Svg>
      </button>
    </div>
  )
}

export default function App() {
  return (
    <div className="relative flex h-screen flex-col overflow-hidden bg-[#e6e6e8] font-['Open_Sans','Noto_Sans_CJK_SC',sans-serif] text-xs leading-4">
      <header className="shrink-0 bg-[#b7472a]">
        <TitleBar />
        <TabStrip />
        <Ribbon />
      </header>
      <DocumentTabs />
      <div className="flex min-h-0 flex-1">
        <SlideList />
        <Editor />
      </div>
      <StatusBar />
      <Taskbar />

      {/* Recording overlays: timer, watermark, pointer */}
      <div className="absolute top-[2px] right-[297px] flex size-[51px] items-center justify-center rounded-full border-3 border-white bg-linear-to-b from-[#3f8cf0] to-[#6bbcfa] text-sm text-white">
        04:04
      </div>
      <div className="absolute top-[13px] left-[1091px] text-5xl leading-[56px] font-bold whitespace-nowrap text-[#fe0000]">工控小</div>
      <div className="absolute top-[160px] left-[460px] size-10 rounded-full bg-[#f5c77d]/65" />
      <Svg w={14} h={20} className="absolute top-[180px] left-[480px]">
        <path d="M1 1v15l3.500-3 2.500 6 2.500-1-2.500-5.800h5z" fill="#fff" stroke="#111" />
      </Svg>
    </div>
  )
}
